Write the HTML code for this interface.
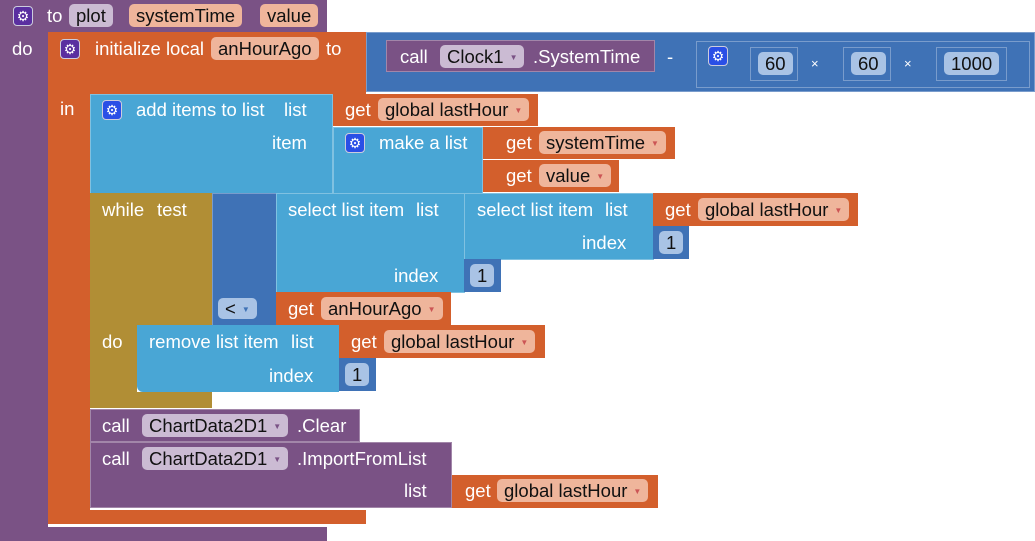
<!DOCTYPE html>
<html><head><style>
body{margin:0;width:1035px;height:541px;background:#fff;position:relative;overflow:hidden;font-family:"Liberation Sans",sans-serif;font-size:18.5px;color:#fff}
.b{position:absolute;box-sizing:border-box}
.P{background:#7a5285}.O{background:#d35f2c}.L{background:#49a6d5}.D{background:#3f72b6}.Y{background:#b18e35}
.t{position:absolute;white-space:nowrap;line-height:20px}
.f{position:absolute;height:23px;line-height:23px;border-radius:5px;padding:0 7px;color:#111;white-space:nowrap;box-sizing:border-box}
.fo{background:#efb59b}.fp{background:#cbbbd3}.fb{background:#a9c3e5}
.g{position:absolute;width:20px;height:20px;border-radius:4px;background:#2a4fe6;border:1px solid #ccd;box-sizing:border-box;color:#fff;font-size:14px;line-height:18px;text-align:center}
.g.pu{background:#5a2fa0}
.ar{font-size:8px;color:#c55;margin-left:6px;vertical-align:3px}
.bl{border:1px solid rgba(255,255,255,.3)}
</style></head><body>
<!-- procedure -->
<div class="b P" style="left:0;top:0;width:327px;height:33px"></div>
<div class="b P" style="left:0;top:32px;width:48px;height:509px"></div>
<div class="b P" style="left:0;top:527px;width:327px;height:14px"></div>
<div class="g pu" style="left:13px;top:6px">⚙</div>
<div class="t" style="left:47px;top:6px">to</div>
<div class="f fp" style="left:69px;top:4px">plot</div>
<div class="f fo" style="left:129px;top:4px">systemTime</div>
<div class="f fo" style="left:260px;top:4px">value</div>
<div class="t" style="left:12px;top:39px">do</div>
<!-- init local -->
<div class="b O" style="left:48px;top:32px;width:318px;height:62px"></div>
<div class="b O" style="left:48px;top:92px;width:42px;height:432px"></div>
<div class="b O" style="left:48px;top:510px;width:318px;height:14px"></div>
<div class="g pu" style="left:60px;top:39px">⚙</div>
<div class="t" style="left:95px;top:39px">initialize local</div>
<div class="f fo" style="left:211px;top:37px">anHourAgo</div>
<div class="t" style="left:326px;top:39px">to</div>
<div class="t" style="left:60px;top:99px">in</div>
<!-- minus block -->
<div class="b D bl" style="left:366px;top:32px;width:669px;height:60px"></div>
<div class="b P bl" style="left:386px;top:40px;width:269px;height:32px"></div>
<div class="t" style="left:400px;top:47px">call</div>
<div class="f fp" style="left:440px;top:45px">Clock1<span class="ar" style="color:#7a5285">▼</span></div>
<div class="t" style="left:533px;top:47px">.SystemTime</div>
<div class="t" style="left:667px;top:47px">-</div>
<div class="b D bl" style="left:696px;top:41px;width:334px;height:47px"></div>
<div class="g" style="left:708px;top:46px">⚙</div>
<div class="b D bl" style="left:750px;top:47px;width:48px;height:34px"></div>
<div class="f fb" style="left:758px;top:52px">60</div>
<div class="t" style="left:811px;top:54px;font-size:13px">×</div>
<div class="b D bl" style="left:843px;top:47px;width:48px;height:34px"></div>
<div class="f fb" style="left:851px;top:52px">60</div>
<div class="t" style="left:904px;top:54px;font-size:13px">×</div>
<div class="b D bl" style="left:936px;top:47px;width:71px;height:34px"></div>
<div class="f fb" style="left:944px;top:52px">1000</div>
<!-- add items -->
<div class="b L bl" style="left:90px;top:94px;width:243px;height:100px"></div>
<div class="g" style="left:102px;top:100px">⚙</div>
<div class="t" style="left:136px;top:100px">add items to list</div>
<div class="t" style="left:284px;top:100px">list</div>
<div class="t" style="left:272px;top:133px">item</div>
<div class="b O" style="left:333px;top:94px;width:205px;height:32px"></div>
<div class="t" style="left:345px;top:100px">get</div>
<div class="f fo" style="left:378px;top:98px">global lastHour<span class="ar">▼</span></div>
<div class="b L bl" style="left:333px;top:127px;width:150px;height:67px"></div>
<div class="g" style="left:345px;top:133px">⚙</div>
<div class="t" style="left:379px;top:133px">make a list</div>
<div class="b O" style="left:483px;top:127px;width:192px;height:32px"></div>
<div class="t" style="left:506px;top:133px">get</div>
<div class="f fo" style="left:539px;top:131px">systemTime<span class="ar">▼</span></div>
<div class="b O" style="left:483px;top:160px;width:136px;height:32px"></div>
<div class="t" style="left:506px;top:166px">get</div>
<div class="f fo" style="left:539px;top:164px">value<span class="ar">▼</span></div>
<!-- while -->
<div class="b Y" style="left:90px;top:193px;width:123px;height:133px"></div>
<div class="b Y" style="left:90px;top:325px;width:47px;height:70px"></div>
<div class="b Y" style="left:90px;top:392px;width:122px;height:16px"></div>
<div class="t" style="left:102px;top:200px">while</div>
<div class="t" style="left:157px;top:200px">test</div>
<div class="t" style="left:102px;top:332px">do</div>
<div class="b D bl" style="left:212px;top:193px;width:65px;height:133px"></div>
<div class="f fb" style="left:218px;top:298px;height:21px;line-height:21px">&lt;<span class="ar" style="color:#3f72b6">▼</span></div>
<div class="b L bl" style="left:276px;top:193px;width:189px;height:100px"></div>
<div class="t" style="left:288px;top:200px">select list item</div>
<div class="t" style="left:416px;top:200px">list</div>
<div class="t" style="left:394px;top:266px">index</div>
<div class="b L bl" style="left:464px;top:193px;width:190px;height:67px"></div>
<div class="t" style="left:477px;top:200px">select list item</div>
<div class="t" style="left:605px;top:200px">list</div>
<div class="t" style="left:582px;top:233px">index</div>
<div class="b O" style="left:653px;top:193px;width:205px;height:33px"></div>
<div class="t" style="left:665px;top:200px">get</div>
<div class="f fo" style="left:698px;top:198px">global lastHour<span class="ar">▼</span></div>
<div class="b D" style="left:653px;top:226px;width:36px;height:33px"></div>
<div class="f fb" style="left:659px;top:231px">1</div>
<div class="b D" style="left:464px;top:259px;width:37px;height:33px"></div>
<div class="f fb" style="left:470px;top:264px">1</div>
<div class="b O" style="left:276px;top:292px;width:175px;height:33px"></div>
<div class="t" style="left:288px;top:299px">get</div>
<div class="f fo" style="left:321px;top:297px">anHourAgo<span class="ar">▼</span></div>
<!-- remove -->
<div class="b L" style="left:137px;top:325px;width:202px;height:67px;border-radius:0 0 0 6px"></div>
<div class="t" style="left:149px;top:332px">remove list item</div>
<div class="t" style="left:291px;top:332px">list</div>
<div class="t" style="left:269px;top:366px">index</div>
<div class="b O" style="left:339px;top:325px;width:206px;height:33px"></div>
<div class="t" style="left:351px;top:332px">get</div>
<div class="f fo" style="left:384px;top:330px">global lastHour<span class="ar">▼</span></div>
<div class="b D" style="left:339px;top:358px;width:37px;height:33px"></div>
<div class="f fb" style="left:345px;top:363px">1</div>
<!-- calls -->
<div class="b P bl" style="left:90px;top:409px;width:270px;height:33px"></div>
<div class="t" style="left:102px;top:416px">call</div>
<div class="f fp" style="left:142px;top:414px">ChartData2D1<span class="ar" style="color:#7a5285">▼</span></div>
<div class="t" style="left:297px;top:416px">.Clear</div>
<div class="b P bl" style="left:90px;top:442px;width:362px;height:66px"></div>
<div class="t" style="left:102px;top:449px">call</div>
<div class="f fp" style="left:142px;top:447px">ChartData2D1<span class="ar" style="color:#7a5285">▼</span></div>
<div class="t" style="left:297px;top:449px">.ImportFromList</div>
<div class="t" style="left:404px;top:481px">list</div>
<div class="b O" style="left:452px;top:475px;width:206px;height:33px"></div>
<div class="t" style="left:465px;top:481px">get</div>
<div class="f fo" style="left:497px;top:479px">global lastHour<span class="ar">▼</span></div>
</body></html>
